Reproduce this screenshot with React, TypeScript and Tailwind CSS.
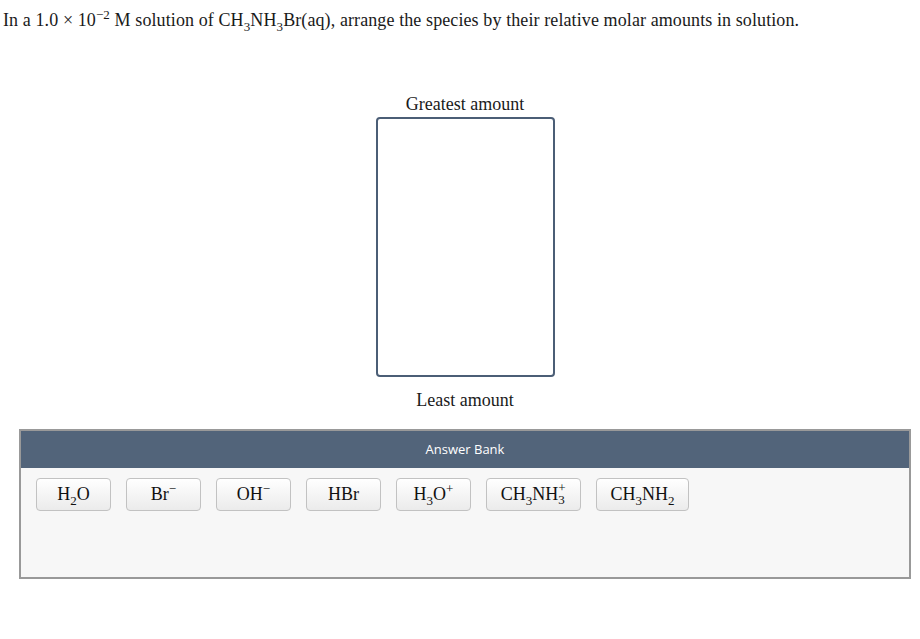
import React from "react";

const serif = { fontFamily: '"Liberation Serif", "Times New Roman", serif' };

type Chip = { key: string; width: string; label: React.ReactNode };

// Preflight already gives sub/sup relative positioning with line-height 0.
const Sub = ({ children }: { children: React.ReactNode }) => (
  <sub className="text-[13px] bottom-[-5px]">{children}</sub>
);
const Sup = ({ children }: { children: React.ReactNode }) => (
  <sup className="text-[13px] top-[-7px]">{children}</sup>
);

const chips: Chip[] = [
  { key: "h2o", width: "w-[75px]", label: <>H<Sub>2</Sub>O</> },
  { key: "br", width: "w-[75px]", label: <>Br<Sup>−</Sup></> },
  { key: "oh", width: "w-[75px]", label: <>OH<Sup>−</Sup></> },
  { key: "hbr", width: "w-[75px]", label: <>HBr</> },
  { key: "h3o", width: "w-[75px]", label: <>H<Sub>3</Sub>O<Sup>+</Sup></> },
  {
    key: "ch3nh3",
    width: "w-[95px]",
    label: (
      <>
        CH<Sub>3</Sub>NH
        <span className="relative inline-block w-[8px] h-[10px] text-[13px] leading-none">
          <span className="absolute left-0 top-[-9px]">+</span>
          <span className="absolute left-0 top-[3px]">3</span>
        </span>
      </>
    ),
  },
  { key: "ch3nh2", width: "w-[93px]", label: <>CH<Sub>3</Sub>NH<Sub>2</Sub></> },
];

export default function App() {
  return (
    <div className="bg-white w-[920px] h-[639px] text-[#1a1a1a]" style={serif}>
      <p className="pl-[3px] pt-[9px] text-[18px] leading-[22px] tracking-[0.1px]">
        In a 1.0 × 10<Sup>−2</Sup> M solution of CH<Sub>3</Sub>NH<Sub>3</Sub>Br(aq), arrange the species by their
        relative molar amounts in solution.
      </p>

      <div className="ml-[19px] w-[892px]">
        <div className="flex flex-col items-center pt-[63px]">
          <div className="text-[18px] leading-[20px]">Greatest amount</div>
          <div className="mt-[3px] w-[179px] h-[260px] border-2 border-[#4b5e76] rounded-[4px] bg-white" />
          <div className="mt-[13px] text-[18px] leading-[20px]">Least amount</div>
        </div>

        <div className="mt-[19px] border-2 border-[#999999] bg-[#f7f7f7] h-[150px]">
          <div
            className="h-[37px] bg-[#52647a] flex items-center justify-center text-white text-[13px]"
            style={{ fontFamily: '"Open Sans", "Noto Sans", sans-serif' }}
          >
            Answer Bank
          </div>
          <div className="flex gap-[15px] pl-[15px] pt-[10px]">
            {chips.map((c) => (
              <div
                key={c.key}
                className={`${c.width} h-[33px] flex items-center justify-center rounded-[4px] border border-[#c2c2c2] bg-gradient-to-b from-white to-[#ebebeb] text-[18px] text-[#111]`}
              >
                <span>{c.label}</span>
              </div>
            ))}
          </div>
        </div>
      </div>
    </div>
  );
}
